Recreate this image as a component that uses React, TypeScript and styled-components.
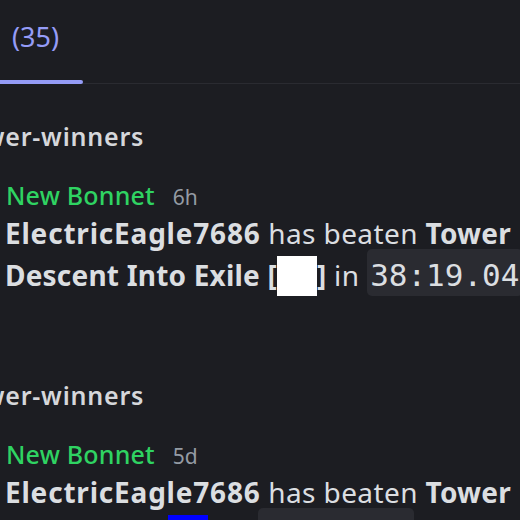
import React from 'react'
import styled, { createGlobalStyle } from 'styled-components'

const GlobalStyle = createGlobalStyle`
  html, body {
    margin: 0;
    padding: 0;
    background: #1c1d22;
  }
  body {
    font-family: 'Noto Sans', 'Open Sans', sans-serif;
    overflow: hidden;
  }
`

type Result = {
  channel: string
  author: string
  when: string
  player: string
  tower: string
  hidden: 'white' | 'blue'
  time: string
}

const results: Result[] = [
  {
    channel: 'tower-winners',
    author: 'New Bonnet',
    when: '6h',
    player: 'ElectricEagle7686',
    tower: 'Descent Into Exile',
    hidden: 'white',
    time: '38:19.04',
  },
  {
    channel: 'tower-winners',
    author: 'New Bonnet',
    when: '5d',
    player: 'ElectricEagle7686',
    tower: 'Frost Veils',
    hidden: 'blue',
    time: '21:47.63',
  },
]

const App = () => {
  return (
    <>
      <GlobalStyle />
      <Page>
        <TabBar>
          <Tab>
            <TabLabel>(35)</TabLabel>
            <TabIndicator />
          </Tab>
        </TabBar>

        <Feed>
          {results.map((r, i) => (
            <Entry key={i}>
              <ChannelName>{r.channel}</ChannelName>
              <MessageHeader>
                <Author>{r.author}</Author>
                <Stamp>{r.when}</Stamp>
              </MessageHeader>
              <Body>
                <Player>{r.player}</Player> has beaten <Strong>Tower</Strong>
                <br />
                <Strong>
                  {r.tower} [<Redacted tone={r.hidden} />]
                </Strong>{' '}
                in <Code>{r.time}</Code>
              </Body>
            </Entry>
          ))}
        </Feed>
      </Page>
    </>
  )
}

export default App

const Page = styled.div`
  width: 520px;
  height: 520px;
  overflow: hidden;
  background: #1c1d22;
`

const TabBar = styled.div`
  display: flex;
  align-items: flex-end;
  height: 83px;
  border-bottom: 1px solid #2a2b31;
`

const Tab = styled.div`
  display: flex;
  flex-direction: column;
  width: 83px;
  height: 84px;
  margin-bottom: -1px;
`

const TabLabel = styled.span`
  flex: 1;
  padding: 20px 0 0 12px;
  font-size: 27px;
  line-height: 34px;
  color: #959cf7;
`

const TabIndicator = styled.div`
  height: 4px;
  background: #959cf7;
  border-radius: 0 2px 2px 0;
`

const Feed = styled.div`
  display: flex;
  flex-direction: column;
  gap: 83px;
  padding-top: 36px;
`

const Entry = styled.div`
  display: flex;
  flex-direction: column;
`

/* channel name runs past the left edge of the pane */
const ChannelName = styled.div`
  margin-left: -43px;
  font-size: 25px;
  font-weight: 600;
  line-height: 32px;
  letter-spacing: 0.8px;
  color: #d5d7db;
  white-space: nowrap;
`

const MessageHeader = styled.div`
  display: flex;
  align-items: baseline;
  gap: 18px;
  margin-top: 27px;
  padding-left: 6px;
`

const Author = styled.span`
  font-size: 25px;
  font-weight: 500;
  line-height: 32px;
  letter-spacing: 0.2px;
  color: #2fd362;
`

const Stamp = styled.span`
  font-size: 21px;
  color: #949ba4;
`

const Body = styled.div`
  padding-left: 5px;
  margin-top: 1px;
  font-size: 28px;
  line-height: 42px;
  letter-spacing: 0.4px;
  color: #dbdee1;
  white-space: nowrap;
`

const Strong = styled.b`
  font-weight: 700;
  letter-spacing: 0.2px;
`

const Player = styled(Strong)`
  letter-spacing: 0.8px;
`

const Redacted = styled.span<{ tone: 'white' | 'blue' }>`
  display: inline-block;
  width: 40px;
  height: 40px;
  vertical-align: -10px;
  background: ${(p) => (p.tone === 'white' ? '#ffffff' : '#0000ff')};
`

const Code = styled.code`
  padding: 8px 4px 3px 3px;
  font-family: 'DejaVu Sans Mono', 'Liberation Mono', monospace;
  font-size: 31px;
  letter-spacing: 0;
  background: #2a2b31;
  border-radius: 5px;
  color: #dbdee1;
`
